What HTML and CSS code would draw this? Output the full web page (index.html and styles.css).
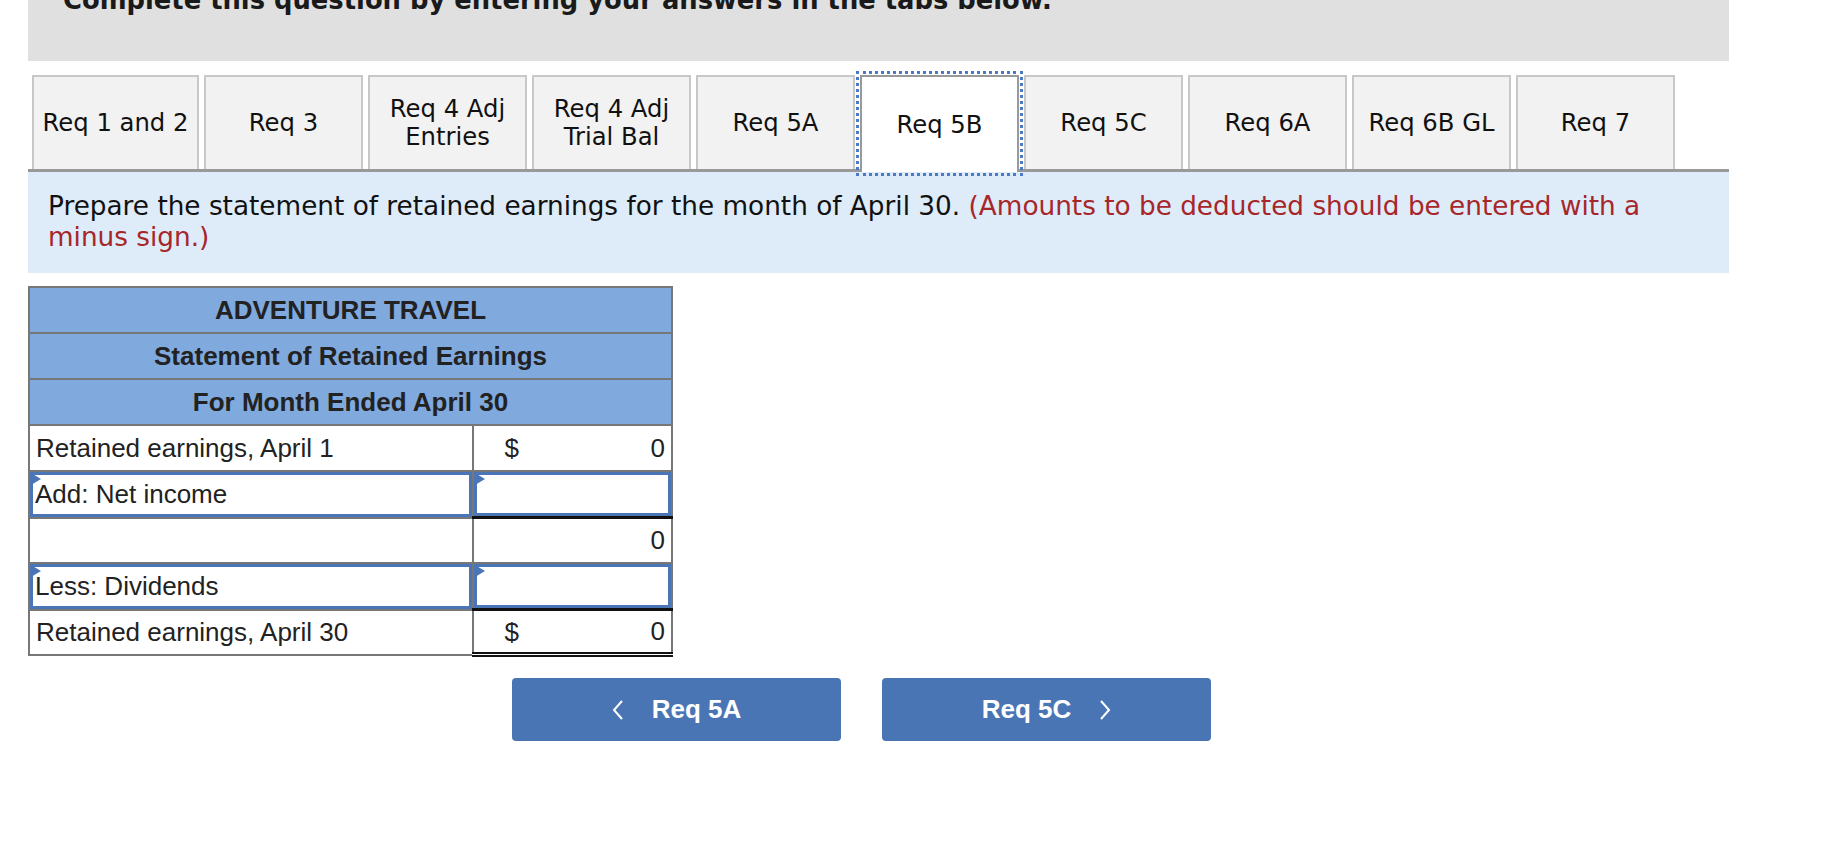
FILE: index.html
```html
<!DOCTYPE html>
<html lang="en">
<head>
<meta charset="utf-8">
<title>Req 5B</title>
<link rel="stylesheet" href="styles.css">
</head>
<body>
<div class="page">
  <div class="banner"><p class="banner-text">Complete this question by entering your answers in the tabs below.</p></div>

  <div class="tabs">
    <div class="tab tab-first">Req 1 and 2</div>
    <div class="tab">Req 3</div>
    <div class="tab">Req 4 Adj<br>Entries</div>
    <div class="tab">Req 4 Adj<br>Trial Bal</div>
    <div class="tab">Req 5A</div>
    <div class="tab tab-active">Req 5B</div>
    <div class="tab">Req 5C</div>
    <div class="tab">Req 6A</div>
    <div class="tab">Req 6B GL</div>
    <div class="tab">Req 7</div>
  </div>

  <div class="instructions">
    Prepare the statement of retained earnings for the month of April 30. <span class="note">(Amounts to be deducted should be entered with a minus sign.)</span>
  </div>

  <table class="stmt">
    <tr class="hdr"><th colspan="2">ADVENTURE TRAVEL</th></tr>
    <tr class="hdr"><th colspan="2">Statement of Retained Earnings</th></tr>
    <tr class="hdr"><th colspan="2">For Month Ended April 30</th></tr>
    <tr>
      <td class="label">Retained earnings, April 1</td>
      <td class="amt"><span class="cur">$</span><span class="num">0</span></td>
    </tr>
    <tr>
      <td class="label input"><span class="flag"></span>Add: Net income</td>
      <td class="amt input"><span class="flag"></span></td>
    </tr>
    <tr class="row-total">
      <td class="label"></td>
      <td class="amt total"><span class="num">0</span></td>
    </tr>
    <tr>
      <td class="label input"><span class="flag"></span>Less: Dividends</td>
      <td class="amt input"><span class="flag"></span></td>
    </tr>
    <tr class="row-final">
      <td class="label">Retained earnings, April 30</td>
      <td class="amt total final"><span class="cur">$</span><span class="num">0</span></td>
    </tr>
  </table>

  <div class="nav">
    <button class="nav-btn">
      <svg class="chev" width="12" height="20" viewBox="0 0 12 20"><polyline points="10,1 2,10 10,19" fill="none" stroke="#fff" stroke-width="2"/></svg>
      <span>Req 5A</span>
    </button>
    <button class="nav-btn">
      <span>Req 5C</span>
      <svg class="chev" width="12" height="20" viewBox="0 0 12 20"><polyline points="2,1 10,10 2,19" fill="none" stroke="#fff" stroke-width="2"/></svg>
    </button>
  </div>
</div>
</body>
</html>
```

FILE: styles.css
```css
html, body {
  margin: 0;
  padding: 0;
  background: #fff;
}

.page {
  padding: 0 113px 0 28px;
  font-family: "DejaVu Sans", Verdana, sans-serif;
  color: #1a1a1a;
}

.banner {
  background: #e0e0e0;
  height: 61px;
  overflow: hidden;
}

.banner-text {
  margin: -15px 0 0 35px;
  font-weight: bold;
  font-size: 25.8px;
  line-height: 30px;
  color: #1a1a1a;
}

.tabs {
  display: flex;
  gap: 5px;
  margin-top: 14px;
  padding-left: 4px;
  height: 94px;
}

.tab {
  box-sizing: border-box;
  width: 159px;
  height: 94px;
  background: #f2f2f2;
  border: 2px solid #c8c8c8;
  border-bottom: none;
  display: flex;
  align-items: center;
  justify-content: center;
  text-align: center;
  font-size: 24.3px;
  line-height: 28px;
  color: #111;
}

.tab-first {
  width: 167px;
}

.tab-active {
  background: #fff;
  border-color: #999;
  height: 97px;
  position: relative;
  z-index: 1;
  outline: 3px dotted #4a7bc4;
  outline-offset: 1px;
}

.instructions {
  background: #deebf8;
  border-top: 3px solid #999;
  padding: 19px 40px 20px 20px;
  font-size: 26.3px;
  line-height: 31px;
  color: #111;
}

.note {
  color: #a6262a;
}

.stmt {
  margin-top: 13px;
  border-collapse: collapse;
  width: 645px;
  font-family: "Liberation Sans", Arial, sans-serif;
  font-size: 26px;
  color: #222;
}

.stmt th {
  background: #80a9de;
  border: 2px solid #777;
  height: 44px;
  padding: 0;
  font-weight: bold;
  text-align: center;
}

.stmt td {
  border: 2px solid #777;
  height: 44px;
  padding: 0;
  position: relative;
}

.stmt .row-total td {
  height: 43px;
}

.stmt .row-final td {
  height: 41px;
}

.label {
  width: 435px;
  padding-left: 6px !important;
}

.amt {
  width: 196px;
}

.amt .cur {
  position: absolute;
  left: 30px;
  top: 50%;
  transform: translateY(-50%);
}

.amt .num {
  display: block;
  text-align: right;
  padding-right: 6px;
}

.input {
  box-shadow: inset 0 0 0 3px #4a76b8;
}

.label.input {
  padding-left: 5px !important;
}

.flag {
  position: absolute;
  left: 1px;
  top: 1px;
  width: 0;
  height: 0;
  border-top: 6px solid transparent;
  border-bottom: 6px solid transparent;
  border-left: 10px solid #4a76b8;
}

.total {
  border-top: 3px solid #111 !important;
}

.final {
  border-bottom: 5px double #111 !important;
}

.nav {
  display: flex;
  gap: 41px;
  margin-top: 21px;
  margin-left: 484px;
}

.nav-btn {
  width: 329px;
  height: 63px;
  background: #4a75b5;
  border: none;
  border-radius: 4px;
  color: #fff;
  font-family: "Liberation Sans", Arial, sans-serif;
  font-weight: bold;
  font-size: 26px;
  display: flex;
  align-items: center;
  justify-content: center;
  gap: 28px;
  padding: 0;
}

.chev {
  display: block;
}
```
